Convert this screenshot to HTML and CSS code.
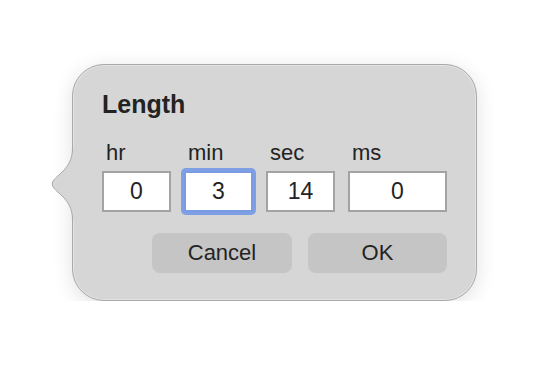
FILE: index.html
```html
<!DOCTYPE html>
<html lang="en">
  <head>
    <meta charset="UTF-8" />
    <meta name="viewport" content="width=device-width, initial-scale=1.0" />
    <title>Length</title>
    <link rel="stylesheet" href="styles.css">
  </head>
  <body>
    <div class="popover">
      <!-- flecha que apunta hacia la izquierda -->
      <svg class="arrow" width="26" height="72" viewBox="0 0 26 72">
        <path class="arrow-fill" d="M22.5 0 C22.5 12 18 19 9 27 C0 34 0 38 9 45 C18 53 22.5 60 22.5 72 L26 72 L26 0 Z" />
        <path class="arrow-line" d="M22.5 0 C22.5 12 18 19 9 27 C0 34 0 38 9 45 C18 53 22.5 60 22.5 72" />
      </svg>

      <h1>Length</h1>

      <div class="fields">
        <div class="field">
          <label for="hr">hr</label>
          <input type="text" id="hr" value="0" />
        </div>
        <div class="field">
          <label for="min">min</label>
          <input type="text" id="min" value="3" class="focused" />
        </div>
        <div class="field">
          <label for="sec">sec</label>
          <input type="text" id="sec" value="14" />
        </div>
        <div class="field">
          <label for="ms">ms</label>
          <input type="text" id="ms" value="0" />
        </div>
      </div>

      <div class="buttons">
        <button>Cancel</button>
        <button>OK</button>
      </div>
    </div>
  </body>
</html>
```

FILE: styles.css
```css
* {
  margin: 0;
  padding: 0;
  box-sizing: border-box;
}

body {
  font-family: "Liberation Sans", Arial, sans-serif;
  background-color: #ffffff;
  color: #232323;
}

.popover {
  position: relative;
  width: 405px;
  margin: 64px 0 0 72px;
  padding: 25px 29px 27px 29px;
  background-color: #d6d6d6;
  border: 1px solid #a9a9a9;
  border-radius: 32px;
  box-shadow: 0 4px 20px rgba(0, 0, 0, 0.12), inset 0 0 0 1px rgba(255, 255, 255, 0.35);
}

.arrow {
  position: absolute;
  left: -23px;
  top: 83px;
  overflow: visible;
}

.arrow-fill {
  fill: #d6d6d6;
}

.arrow-line {
  fill: none;
  stroke: #a9a9a9;
  stroke-width: 1;
}

h1 {
  font-size: 25px;
  line-height: 28px;
  font-weight: bold;
  color: #232323;
}

.fields {
  display: grid;
  grid-template-columns: 69px 69px 69px 99px;
  gap: 13px;
  margin-top: 22px;
}

.field label {
  display: block;
  font-size: 22px;
  line-height: 26px;
  padding-left: 4px;
  margin-bottom: 5px;
}

.field input {
  display: block;
  width: 100%;
  height: 41px;
  border: 2px solid #a3a3a3;
  background-color: #ffffff;
  font-family: "Liberation Sans", Arial, sans-serif;
  font-size: 23px;
  color: #232323;
  text-align: center;
  outline: none;
}

.field input.focused {
  border-color: #7b9be2;
  border-radius: 2px;
  box-shadow: 0 0 0 3px #7f9fe4;
}

.buttons {
  display: flex;
  justify-content: flex-end;
  gap: 16px;
  margin-top: 21px;
}

.buttons button {
  width: 140px;
  height: 40px;
  border: none;
  border-radius: 8px;
  background-color: #c5c5c5;
  font-family: "Liberation Sans", Arial, sans-serif;
  font-size: 22px;
  color: #232323;
}

.buttons button:last-child {
  width: 139px;
}
```
